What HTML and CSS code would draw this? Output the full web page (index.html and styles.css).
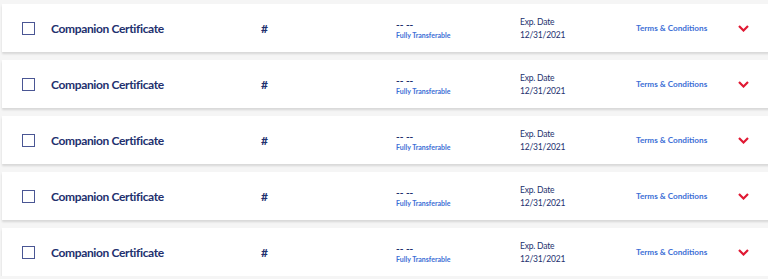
FILE: index.html
```html
<!DOCTYPE html>
<html lang="en">
<head>
    <meta charset="UTF-8">
    <meta name="viewport" content="width=device-width, initial-scale=1.0">
    <title>Certificates</title>
    <link rel="stylesheet" href="styles.css">
</head>
<body>
    <!-- Certificate list -->
    <div class="cert-list">
        <div class="cert-row">
            <span class="cert-check"></span>
            <div class="cert-name">Companion Certificate</div>
            <div class="cert-number">#</div>
            <div class="cert-status">
                <div class="status-value">-- --</div>
                <div class="status-note">Fully Transferable</div>
            </div>
            <div class="cert-exp">
                <div>Exp. Date</div>
                <div>12/31/2021</div>
            </div>
            <div class="cert-terms">Terms &amp; Conditions</div>
            <svg class="cert-toggle" width="11" height="7" viewBox="0 0 11 7"><path d="M1 1l4.5 4.5L10 1" fill="none" stroke="#e01933" stroke-width="2.2"/></svg>
        </div>
        <div class="cert-row">
            <span class="cert-check"></span>
            <div class="cert-name">Companion Certificate</div>
            <div class="cert-number">#</div>
            <div class="cert-status">
                <div class="status-value">-- --</div>
                <div class="status-note">Fully Transferable</div>
            </div>
            <div class="cert-exp">
                <div>Exp. Date</div>
                <div>12/31/2021</div>
            </div>
            <div class="cert-terms">Terms &amp; Conditions</div>
            <svg class="cert-toggle" width="11" height="7" viewBox="0 0 11 7"><path d="M1 1l4.5 4.5L10 1" fill="none" stroke="#e01933" stroke-width="2.2"/></svg>
        </div>
        <div class="cert-row">
            <span class="cert-check"></span>
            <div class="cert-name">Companion Certificate</div>
            <div class="cert-number">#</div>
            <div class="cert-status">
                <div class="status-value">-- --</div>
                <div class="status-note">Fully Transferable</div>
            </div>
            <div class="cert-exp">
                <div>Exp. Date</div>
                <div>12/31/2021</div>
            </div>
            <div class="cert-terms">Terms &amp; Conditions</div>
            <svg class="cert-toggle" width="11" height="7" viewBox="0 0 11 7"><path d="M1 1l4.5 4.5L10 1" fill="none" stroke="#e01933" stroke-width="2.2"/></svg>
        </div>
        <div class="cert-row">
            <span class="cert-check"></span>
            <div class="cert-name">Companion Certificate</div>
            <div class="cert-number">#</div>
            <div class="cert-status">
                <div class="status-value">-- --</div>
                <div class="status-note">Fully Transferable</div>
            </div>
            <div class="cert-exp">
                <div>Exp. Date</div>
                <div>12/31/2021</div>
            </div>
            <div class="cert-terms">Terms &amp; Conditions</div>
            <svg class="cert-toggle" width="11" height="7" viewBox="0 0 11 7"><path d="M1 1l4.5 4.5L10 1" fill="none" stroke="#e01933" stroke-width="2.2"/></svg>
        </div>
        <div class="cert-row">
            <span class="cert-check"></span>
            <div class="cert-name">Companion Certificate</div>
            <div class="cert-number">#</div>
            <div class="cert-status">
                <div class="status-value">-- --</div>
                <div class="status-note">Fully Transferable</div>
            </div>
            <div class="cert-exp">
                <div>Exp. Date</div>
                <div>12/31/2021</div>
            </div>
            <div class="cert-terms">Terms &amp; Conditions</div>
            <svg class="cert-toggle" width="11" height="7" viewBox="0 0 11 7"><path d="M1 1l4.5 4.5L10 1" fill="none" stroke="#e01933" stroke-width="2.2"/></svg>
        </div>
    </div>
</body>
</html>
```

FILE: styles.css
```css
* {
    margin: 0;
    padding: 0;
    box-sizing: border-box;
}

body {
    background-color: #f5f5f5;
    font-family: Lato, 'Open Sans', sans-serif;
    color: #22306e;
    overflow: hidden;
}

/* Lista de certificados */
.cert-list {
    display: flex;
    flex-direction: column;
    gap: 8px;
    padding: 4px 0 0 2px;
    margin-right: -6px;
}

.cert-row {
    display: flex;
    align-items: center;
    height: 48px;
    padding-left: 20px;
    background-color: white;
    box-shadow: 0 2px 2px rgba(0,0,0,0.12);
}

.cert-check {
    width: 13px;
    height: 13px;
    border: 1.5px solid #4a5694;
    flex-shrink: 0;
}

.cert-name {
    width: 210px;
    margin-left: 16px;
    font-size: 12px;
    font-weight: bold;
    letter-spacing: -0.35px;
}

.cert-number {
    width: 135px;
    font-size: 12px;
    font-weight: bold;
}

.cert-status {
    width: 124px;
    margin-top: 3px;
}

.status-value {
    font-size: 10px;
    font-weight: bold;
    line-height: 12px;
}

.status-note {
    font-size: 7px;
    font-weight: bold;
    color: #3d6fd6;
    line-height: 11px;
}

.cert-exp {
    width: 116px;
    font-size: 8.5px;
    line-height: 13px;
    letter-spacing: -0.2px;
    margin-top: 1px;
}

.cert-terms {
    width: 102px;
    font-size: 8.2px;
    font-weight: bold;
    color: #3d6fd6;
}

.cert-toggle {
    display: block;
}
```
